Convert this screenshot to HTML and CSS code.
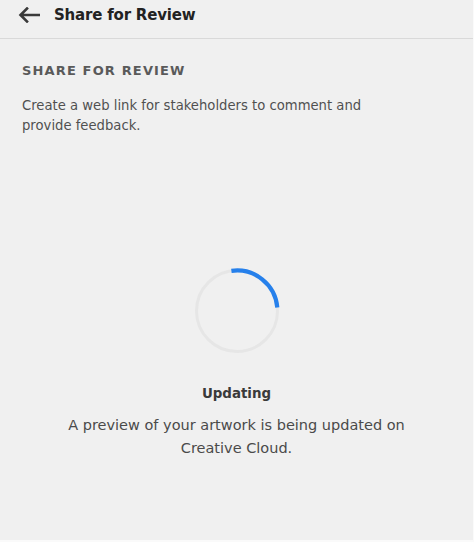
FILE: index.html
```html
<!DOCTYPE html>
<html>
<head>
<meta charset="utf-8">
<link rel="stylesheet" href="styles.css">
</head>
<body>
<div class="panel">
  <header class="topbar">
    <svg class="back" width="22" height="16" viewBox="0 0 22 16"><path d="M21 8H3M9 1.5L2.5 8L9 14.5" fill="none" stroke="#3a3a3a" stroke-width="2.6" stroke-linecap="square"/></svg>
    <h1 class="title">Share for Review</h1>
  </header>
  <section class="intro">
    <h2 class="section-title">SHARE FOR REVIEW</h2>
    <p class="desc">Create a web link for stakeholders to comment and provide feedback.</p>
  </section>
  <section class="status">
    <svg class="spinner" width="90" height="90" viewBox="0 0 90 90">
      <circle cx="45" cy="45" r="40.5" fill="none" stroke="#e6e6e6" stroke-width="3"/>
      <path d="M39.4 4.9 A40.5 40.5 0 0 1 85.3 41.5" fill="none" stroke="#2680eb" stroke-width="4.2"/>
    </svg>
    <h3 class="status-title">Updating</h3>
    <p class="status-text">A preview of your artwork is being updated on Creative Cloud.</p>
  </section>
</div>
</body>
</html>
```
FILE: styles.css
```css
html, body {
  margin: 0;
  padding: 0;
}
body {
  background: #f0f0f0;
  font-family: "DejaVu Sans", Verdana, sans-serif;
  color: #4b4b4b;
}
.panel {
  width: 473px;
  height: 540px;
  border-right: 1px solid #fafafa;
  border-bottom: 2px solid #fafafa;
  display: flex;
  flex-direction: column;
}
.topbar {
  height: 29px;
  padding-bottom: 9px;
  border-bottom: 1px solid #d9d9d9;
  display: flex;
  align-items: center;
  padding-left: 18px;
  gap: 14px;
}
.back {
  display: block;
}
.title {
  margin: 0;
  font-size: 15px;
  letter-spacing: -0.2px;
  font-weight: bold;
  color: #222;
}
.intro {
  padding: 22px 22px 0;
}
.section-title {
  margin: 0;
  font-size: 13px;
  font-weight: bold;
  letter-spacing: 1.15px;
  color: #5a5a5a;
  line-height: 20px;
}
.desc {
  margin: 15px 0 0;
  font-size: 13.2px;
  line-height: 20px;
  color: #505050;
  width: 360px;
}
.status {
  display: flex;
  flex-direction: column;
  align-items: center;
  padding-top: 130px;
}
.spinner {
  display: block;
}
.status-title {
  margin: 28px 0 0;
  font-size: 13.4px;
  font-weight: bold;
  color: #3a3a3a;
  line-height: 20px;
}
.status-text {
  margin: 10px 0 0;
  width: 360px;
  text-align: center;
  font-size: 14.5px;
  line-height: 23px;
  color: #4a4a4a;
}
```
